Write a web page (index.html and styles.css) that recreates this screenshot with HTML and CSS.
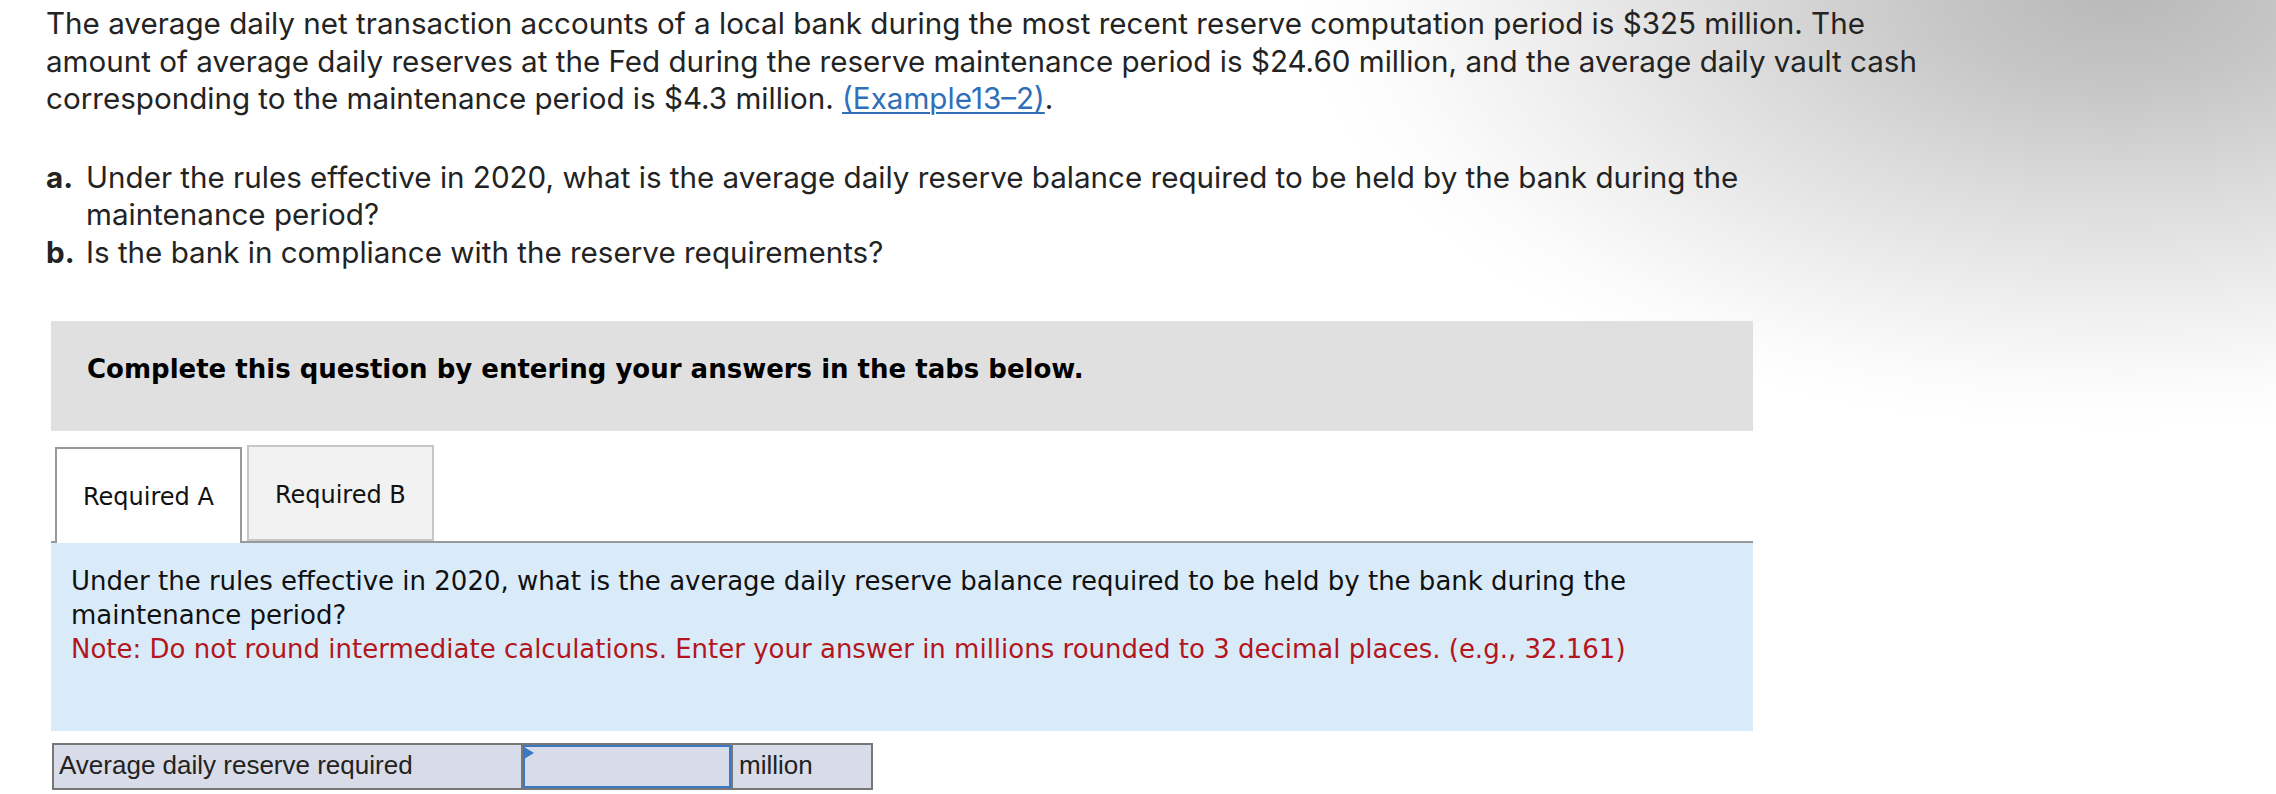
FILE: index.html
```html
<!DOCTYPE html>
<html lang="en">
<head>
<meta charset="utf-8">
<title>Reserve requirements</title>
<link rel="stylesheet" href="styles.css">
</head>
<body>
<main class="page">
  <p class="intro">The average daily net transaction accounts of a local bank during the most recent reserve computation period is $325 million. The amount of average daily reserves at the Fed during the reserve maintenance period is $24.60 million, and the average daily vault cash corresponding to the maintenance period is $4.3 million. <a class="ref" href="#">(Example13–2)</a>.</p>

  <div class="parts">
    <div class="part"><span class="part-label">a.</span><span class="part-text">Under the rules effective in 2020, what is the average daily reserve balance required to be held by the bank during the maintenance period?</span></div>
    <div class="part"><span class="part-label">b.</span><span class="part-text">Is the bank in compliance with the reserve requirements?</span></div>
  </div>

  <section class="question">
    <div class="instructions">Complete this question by entering your answers in the tabs below.</div>

    <div class="tabs">
      <div class="tab tab-active">Required A</div>
      <div class="tab">Required B</div>
    </div>

    <div class="panel">
      <p class="panel-text">Under the rules effective in 2020, what is the average daily reserve balance required to be held by the bank during the maintenance period?</p>
      <p class="panel-note">Note: Do not round intermediate calculations. Enter your answer in millions rounded to 3 decimal places. (e.g., 32.161)</p>
    </div>

    <div class="answer">
      <div class="cell cell-label">Average daily reserve required</div>
      <div class="cell cell-input"><div class="field"><span class="flag"></span></div></div>
      <div class="cell cell-unit">million</div>
    </div>
  </section>
</main>
</body>
</html>
```
FILE: styles.css
```css
html {
  background: #ffffff radial-gradient(ellipse 820px 440px at 2120px -10px, #b8b8b8 0%, #c6c6c6 22%, #dcdcdc 48%, #f0f0f0 74%, #fbfbfb 90%, #ffffff 100%) no-repeat;
  min-height: 100%;
}

body {
  margin: 0;
}

.page {
  padding: 5px 0 0 46px;
}

.intro {
  margin: 0;
  width: 1890px;
  font-family: "Inter", "Liberation Sans", sans-serif;
  font-size: 29.6px;
  line-height: 37.5px;
  color: #232323;
}

.ref {
  color: #2f6fba;
  text-decoration: underline;
  text-underline-offset: 3px;
  text-decoration-thickness: 2px;
}

.parts {
  margin-top: 41px;
  width: 1850px;
  font-family: "Inter", "Liberation Sans", sans-serif;
  font-size: 29.6px;
  line-height: 37.5px;
  color: #232323;
}

.part {
  display: flex;
}

.part-label {
  flex: 0 0 40px;
  font-weight: 700;
}

.part-text {
  flex: 1 1 auto;
}

.question {
  margin: 50px 0 0 5px;
  width: 1702px;
  font-family: "DejaVu Sans", "Verdana", sans-serif;
}

.instructions {
  background: #e0e0e0;
  padding: 33px 36px 47px;
  font-size: 26px;
  line-height: 30px;
  font-weight: 700;
  color: #000000;
}

.tabs {
  margin-top: 14px;
  padding-left: 4px;
  display: flex;
  align-items: flex-end;
  gap: 5px;
  border-bottom: 2px solid #999999;
}

.tab {
  padding: 34px 26px 30px;
  font-size: 24px;
  line-height: 28px;
  color: #111111;
  background: #f2f2f2;
  border: 2px solid #c6c6c6;
}

.tab-active {
  background: #ffffff;
  border-color: #999999;
  border-bottom: none;
  padding-bottom: 32px;
  margin-bottom: -2px;
}

.panel {
  background: #d9ebf9;
  padding: 21px 20px 65px;
  font-size: 26px;
  line-height: 34px;
  color: #111111;
}

.panel-text,
.panel-note {
  margin: 0;
}

.panel-note {
  color: #b3161c;
}

.answer {
  margin: 12px 0 0 1px;
  display: inline-flex;
  border: 2px solid #777777;
  background: #d8dce8;
  font-family: "Liberation Sans", "Arial", sans-serif;
  font-size: 26px;
  color: #222222;
}

.cell {
  height: 43px;
  line-height: 41px;
}

.cell-label {
  width: 462px;
  padding-left: 5px;
  border-right: 2px solid #777777;
}

.cell-input {
  width: 208px;
  border-right: 2px solid #777777;
}

.field {
  position: relative;
  box-sizing: border-box;
  height: 43px;
  border: 2px solid #3a78c3;
}

.flag {
  position: absolute;
  left: -1px;
  top: 0;
  width: 0;
  height: 0;
  border-left: 10px solid #3a78c3;
  border-top: 6.5px solid transparent;
  border-bottom: 6.5px solid transparent;
}

.cell-unit {
  width: 132px;
  padding-left: 6px;
}
```
